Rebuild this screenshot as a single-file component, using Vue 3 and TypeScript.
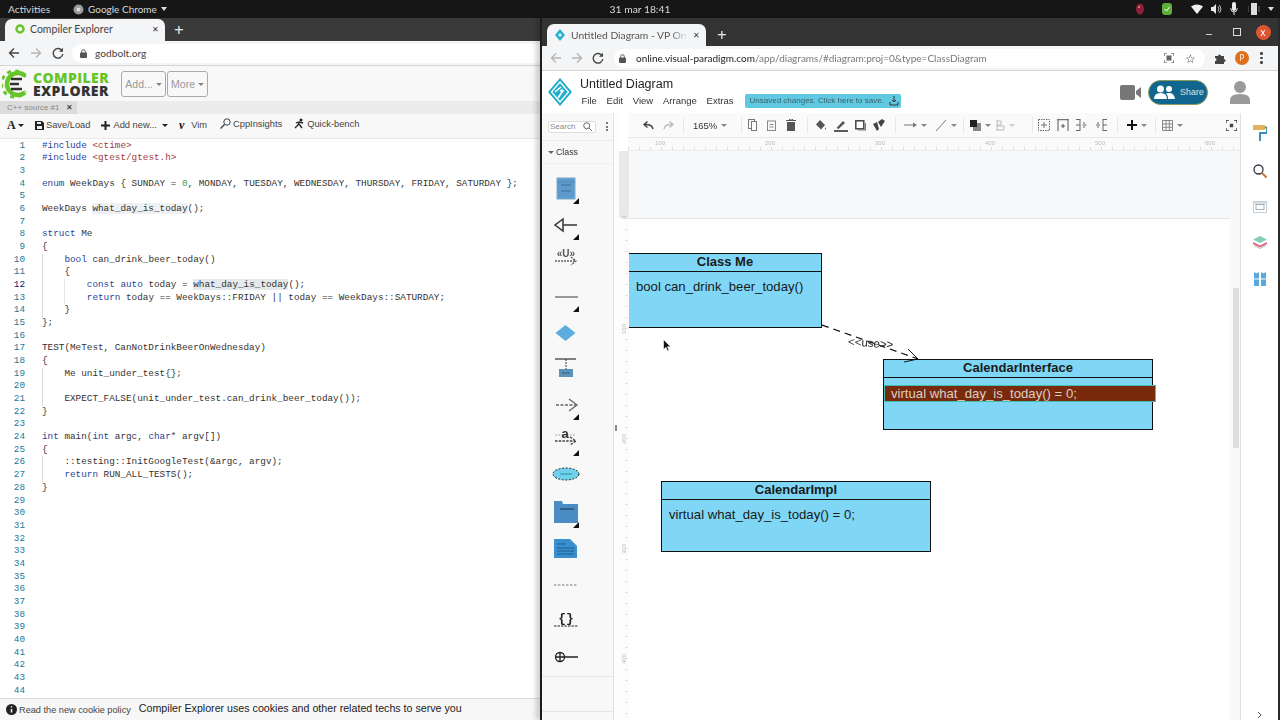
<script setup lang="ts">
const codeLines = [
  '#include <ctime>',
  '#include <gtest/gtest.h>',
  '',
  'enum WeekDays { SUNDAY = 0, MONDAY, TUESDAY, WEDNESDAY, THURSDAY, FRIDAY, SATURDAY };',
  '',
  'WeekDays what_day_is_today();',
  '',
  'struct Me',
  '{',
  '    bool can_drink_beer_today()',
  '    {',
  '        const auto today = what_day_is_today();',
  '        return today == WeekDays::FRIDAY || today == WeekDays::SATURDAY;',
  '    }',
  '};',
  '',
  'TEST(MeTest, CanNotDrinkBeerOnWednesday)',
  '{',
  '    Me unit_under_test{};',
  '',
  '    EXPECT_FALSE(unit_under_test.can_drink_beer_today());',
  '}',
  '',
  'int main(int argc, char* argv[])',
  '{',
  '    ::testing::InitGoogleTest(&argc, argv);',
  '    return RUN_ALL_TESTS();',
  '}'
]

const tokenRe = /(#include|<ctime>|<gtest\/gtest\.h>|\b(?:enum|struct|bool|const|auto|return|int|char)\b|\b0\b|what_day_is_today)/

function tokenClass(t: string) {
  if (t === 'what_day_is_today') return 'hl'
  if (t === '0') return 'num'
  if (t.startsWith('<')) return 'str'
  if (tokenRe.test(t)) return 'kw'
  return ''
}

const rows = Array.from({ length: 44 }, (_, i) => {
  const text = codeLines[i] ?? ''
  const lead = text.length - text.trimStart().length
  return {
    n: i + 1,
    depth: i === 19 ? 1 : Math.ceil(lead / 4),
    tokens: text.split(tokenRe).filter(Boolean).map(t => ({ t, c: tokenClass(t) }))
  }
})

const palette = [
  { id: 'class', more: true },
  { id: 'generalization', more: true },
  { id: 'use', more: false },
  { id: 'association', more: true },
  { id: 'diamond', more: false },
  { id: 'containment', more: false },
  { id: 'dependency', more: true },
  { id: 'anchor', more: true },
  { id: 'collab', more: false },
  { id: 'package', more: true },
  { id: 'note', more: false },
  { id: 'dashed', more: false },
  { id: 'constraint', more: false },
  { id: 'interface', more: false }
]

const topRuler = [100, 200, 300, 400, 500, 600]
const sideRuler = [0, 100, 200, 300, 400]
</script>

<template>
  <div class="screen">
    <header class="topbar">
      <span class="activities">Activities</span>
      <span class="app-name">
        <svg width="11" height="11" viewBox="0 0 12 12"><circle cx="6" cy="6" r="5.5" fill="#9a9a9a" /><circle cx="6" cy="6" r="2.2" fill="#dcdcdc" /></svg>
        Google Chrome
        <i class="caret-w"></i>
      </span>
      <span class="clock">31 mar 18:41</span>
      <div class="tray">
        <svg width="10" height="14" viewBox="0 0 10 14"><ellipse cx="5" cy="7" rx="4" ry="5.5" fill="#8e1f3a" /><circle cx="4" cy="5" r="1" fill="#d98" /></svg>
        <svg width="12" height="14" viewBox="0 0 12 14"><rect x="1" y="1" width="10" height="12" rx="3" fill="#5fae3a" /><path d="M3.5 7l2 2 3-4" stroke="#fff" fill="none" /></svg>
        <svg width="12" height="10" viewBox="0 0 12 10"><path d="M0 2.5Q6-1.500 12 2.500L6 10z" fill="#f0f0f0" /></svg>
        <svg width="11" height="10" viewBox="0 0 11 10"><path d="M0 3h2l3-3v10L2 7H0z" fill="#e8e8e8" /><path d="M7 2.500Q9 5 7 7.500M8.500 1Q11.500 5 8.500 9" stroke="#bbb" fill="none" /></svg>
        <svg width="8" height="14" viewBox="0 0 8 14"><rect x="2" y="0" width="4" height="9" rx="2" fill="#eee" /><path d="M.7 6q0 4 3.300 4t3.300-4M4 10v3" stroke="#ddd" fill="none" /></svg>
        <svg width="12" height="14" viewBox="0 0 12 14"><rect x="3" y="1" width="6" height="12" fill="#ddd" /><path d="M0 4v6M11 4v6" stroke="#666" /></svg>
        <i class="caret-w"></i>
      </div>
    </header>

    <div class="desktop">
      <!-- left chrome window -->
      <section class="win win-left">
        <div class="tabstrip">
          <div class="tab tab-ce">
            <svg width="10" height="10" viewBox="0 0 10 10"><circle cx="5" cy="5" r="3.500" fill="none" stroke="#67c52a" stroke-width="2.500" /></svg>
            <span class="tab-title">Compiler Explorer</span>
            <span class="tab-x">✕</span>
          </div>
          <span class="tab-plus">+</span>
        </div>
        <div class="omnibar">
          <svg class="nav" width="12" height="12" viewBox="0 0 12 12"><path d="M11 6H2M6 1.500L1.500 6 6 10.500" fill="none" stroke="#444" stroke-width="1.400" /></svg>
          <svg class="nav" width="12" height="12" viewBox="0 0 12 12"><path d="M1 6h9M6 1.500L10.500 6 6 10.500" fill="none" stroke="#b5b5b5" stroke-width="1.400" /></svg>
          <svg class="nav" width="12" height="12" viewBox="0 0 12 12"><path d="M10.300 4A4.800 4.800 0 1 0 10.800 7" fill="none" stroke="#444" stroke-width="1.400" /><path d="M11 .8v4H7z" fill="#444" /></svg>
          <div class="url url-ce">
            <svg width="7" height="9" viewBox="0 0 7 9"><rect y="3.500" width="7" height="5.500" rx="1" fill="#555" /><path d="M1.700 4V2.500a1.800 1.800 0 0 1 3.600 0V4" fill="none" stroke="#555" /></svg>
            <span>godbolt.org</span>
          </div>
        </div>

        <nav class="ce-nav">
          <div class="ce-logo">
            <svg width="29" height="30" viewBox="0 0 29 30">
              <path d="M23 6.500A11 11 0 1 0 23 23.500" fill="none" stroke="#67c52a" stroke-width="4.500" />
              <path d="M24 8A13 13 0 1 0 24 22" fill="none" stroke="#67c52a" stroke-width="3" stroke-dasharray="4 4.200" transform="translate(-.5 0)" />
              <path d="M9 10h11M8 15h9M9 20h11" stroke="#333" stroke-width="2.400" />
            </svg>
            <div class="ce-words"><b class="g">COMPILER</b><b>EXPLORER</b></div>
          </div>
          <button class="ce-btn add">Add... <i class="caret"></i></button>
          <button class="ce-btn more">More <i class="caret"></i></button>
        </nav>

        <div class="gl-tabs">
          <span class="gl-tab">C++ source #1 <em>✕</em></span>
        </div>
        <div class="editor-tools">
          <span class="font-a"><b>A</b><i class="caret dark"></i></span>
          <span class="tool save">
            <svg width="9" height="9" viewBox="0 0 9 9"><path d="M0 0h7l2 2v7H0z" fill="#222" /><rect x="2" y="5" width="5" height="3" fill="#eee" /><rect x="2" y="1" width="4" height="2" fill="#eee" /></svg>
            Save/Load
          </span>
          <span class="tool addnew">
            <svg width="9" height="9" viewBox="0 0 9 9"><path d="M4.500 0v9M0 4.500h9" stroke="#222" stroke-width="2" /></svg>
            Add new...<i class="caret dark"></i>
          </span>
          <span class="tool vim"><b>v</b> Vim</span>
          <span class="tool raised insights">
            <svg width="11" height="11" viewBox="0 0 11 11"><circle cx="7" cy="4" r="3.200" fill="none" stroke="#345" /><path d="M4.500 6.500L.5 10.500" stroke="#345" stroke-width="1.300" /></svg>
            CppInsights
          </span>
          <span class="tool raised bench">
            <svg width="11" height="11" viewBox="0 0 11 11"><circle cx="7" cy="2" r="1.500" fill="#222" /><path d="M1 10l3-3 1-3 4 1M5 6l3 4M4 4l-2 1" stroke="#222" stroke-width="1.300" fill="none" /></svg>
            Quick-bench
          </span>
        </div>

        <div class="editor">
          <div v-for="r in rows" :key="r.n" class="row">
            <span class="ln" :class="{ cur: r.n === 12 }">{{ r.n }}</span>
            <span class="code" :class="'lv' + r.depth"><span v-for="(tok, i) in r.tokens" :key="i" :class="[tok.c, { strong: r.n === 12 && tok.c === 'hl' }]">{{ tok.t }}</span></span>
          </div>
        </div>

        <footer class="cookie">
          <svg width="11" height="11" viewBox="0 0 11 11"><circle cx="5.500" cy="5.500" r="5.500" fill="#222" /><path d="M5.500 2.200v1.300M5.500 5v3.500" stroke="#fff" stroke-width="1.500" /></svg>
          <span class="policy">Read the new cookie policy</span>
          <span class="cookie-msg">Compiler Explorer uses cookies and other related techs to serve you</span>
        </footer>
      </section>

      <!-- right chrome window -->
      <section class="win win-right">
        <div class="tabstrip tabstrip-r">
          <div class="tab tab-vp">
            <svg width="10" height="12" viewBox="0 0 10 12"><path d="M5 0l5 6-5 6-5-6z" fill="#28b3d0" /><circle cx="5" cy="6" r="1.500" fill="#fff" /></svg>
            <span class="tab-title fade">Untitled Diagram - VP On</span>
            <span class="tab-x">✕</span>
          </div>
          <span class="tab-plus">+</span>
          <div class="wm">
            <span class="wm-min"></span>
            <span class="wm-max"></span>
            <span class="wm-close">x</span>
          </div>
        </div>
        <div class="omnibar omnibar-r">
          <svg class="nav" width="12" height="12" viewBox="0 0 12 12"><path d="M11 6H2M6 1.500L1.500 6 6 10.500" fill="none" stroke="#b5b5b5" stroke-width="1.400" /></svg>
          <svg class="nav" width="12" height="12" viewBox="0 0 12 12"><path d="M1 6h9M6 1.500L10.500 6 6 10.500" fill="none" stroke="#b5b5b5" stroke-width="1.400" /></svg>
          <svg class="nav" width="12" height="12" viewBox="0 0 12 12"><path d="M10.300 4A4.800 4.800 0 1 0 10.800 7" fill="none" stroke="#444" stroke-width="1.400" /><path d="M11 .8v4H7z" fill="#444" /></svg>
          <div class="url url-vp">
            <svg width="7" height="9" viewBox="0 0 7 9"><rect y="3.500" width="7" height="5.500" rx="1" fill="#555" /><path d="M1.700 4V2.500a1.800 1.800 0 0 1 3.600 0V4" fill="none" stroke="#555" /></svg>
            <span class="url-text"><span class="host">online.visual-paradigm.com</span>/app/diagrams/#diagram:proj=0&amp;type=ClassDiagram</span>
            <svg class="qr" width="10" height="10" viewBox="0 0 10 10"><path d="M0 3V0h3M7 0h3v3M10 7v3H7M3 10H0V7" fill="none" stroke="#555" stroke-width="1.200" /><rect x="2.500" y="2.500" width="5" height="5" fill="#666" /></svg>
            <span class="star">☆</span>
          </div>
          <svg class="puzzle" width="11" height="11" viewBox="0 0 11 11"><path d="M0 3h3a1.500 1.500 0 0 1 3 0h3v3a1.500 1.500 0 0 1 0 3v2H0V8a1.500 1.500 0 0 0 0-3z" fill="#444" /></svg>
          <span class="avatar">P</span>
          <span class="dots"><i></i><i></i><i></i></span>
        </div>

        <div class="vp-header">
          <svg class="vp-logo" width="26" height="30" viewBox="0 0 26 30">
            <path d="M13 1l12 14-12 14L1 15z" fill="#22aecb" />
            <path d="M13 5l8.500 10L13 25 4.500 15z" fill="none" stroke="#fff" stroke-width="1.300" />
            <path d="M8 15l6-5M11 21l4-6" stroke="#fff" stroke-width="1.600" />
            <circle cx="15" cy="14" r="1.800" fill="#fff" />
          </svg>
          <div class="vp-titles">
            <div class="vp-title">Untitled Diagram</div>
            <div class="vp-menu">
              <span>File</span><span>Edit</span><span>View</span><span>Arrange</span><span>Extras</span>
              <span class="unsaved">Unsaved changes. Click here to save.
                <svg width="10" height="10" viewBox="0 0 10 10"><path d="M5 0v6M3 4l2 2 2-2M1 6v3h8V6" fill="none" stroke="#333" /></svg>
              </span>
            </div>
          </div>
          <div class="vp-actions">
            <svg width="21" height="15" viewBox="0 0 21 15"><rect width="15" height="15" rx="2" fill="#777" /><path d="M16 6l5-4v11l-5-4z" fill="#777" /></svg>
            <div class="share">
              <svg width="21" height="14" viewBox="0 0 21 14"><circle cx="6.500" cy="4" r="3.500" fill="#fff" /><circle cx="15" cy="4" r="3" fill="#fff" /><path d="M0 14q0-6 6.500-6t6.500 6zM14 14q0-4-2-5.500 8-2 9 5.500z" fill="#fff" /></svg>
              <span>Share</span>
            </div>
            <svg class="person" width="20" height="24" viewBox="0 0 20 24"><circle cx="10" cy="7" r="6" fill="#9a9a9a" /><path d="M0 24v-4q0-6 10-6t10 6v4z" fill="#9a9a9a" /></svg>
          </div>
        </div>

        <div class="vp-body">
          <aside class="palette-col">
            <div class="pal-search">
              <span class="search-box">Search
                <svg width="9" height="9" viewBox="0 0 9 9"><circle cx="3.700" cy="3.700" r="3" fill="none" stroke="#666" /><path d="M6 6l3 3" stroke="#666" /></svg>
              </span>
              <span class="vdots"><i></i><i></i><i></i></span>
            </div>
            <div class="pal-head"><i class="caret dark-g"></i> Class</div>
            <div class="pal-list">
              <div v-for="p in palette" :key="p.id" class="pal-item">
                <svg width="30" height="30" viewBox="0 0 30 30">
                  <g v-if="p.id === 'class'"><rect x="6" y="4" width="18" height="21" fill="#5d9bcc" stroke="#7fa9c9" /><path d="M10 11h10M10 17h10" stroke="#3a6f9c" /><path d="M6 8h18" stroke="#3a6f9c" opacity=".4" /></g>
                  <g v-else-if="p.id === 'generalization'"><path d="M12 9L4 15l8 6zM12 15h14" fill="none" stroke="#333" stroke-width="1.500" /></g>
                  <g v-else-if="p.id === 'use'"><text x="15" y="11" class="pal-t">«U»</text><path d="M4 15h20M20 11l5 4-5 4" fill="none" stroke="#666" stroke-dasharray="2 1" stroke-width="1.300" /></g>
                  <g v-else-if="p.id === 'association'"><path d="M4 15h23" stroke="#999" stroke-width="2" /></g>
                  <g v-else-if="p.id === 'diamond'"><path d="M14.500 7l10 8-10 8-10-8z" fill="#5dace0" /></g>
                  <g v-else-if="p.id === 'containment'"><path d="M4 5h21" stroke="#333" stroke-width="1.200" /><path d="M15 5v11" stroke="#333" stroke-dasharray="2 1" /><rect x="8" y="15" width="14" height="8" fill="#5d93bb" /><path d="M11 19h8" stroke="#35607f" /></g>
                  <g v-else-if="p.id === 'dependency'"><path d="M5 15h20" stroke="#666" stroke-dasharray="3 1.500" stroke-width="1.300" /><path d="M18 9l8 6-8 6" fill="none" stroke="#666" stroke-width="1.300" /></g>
                  <g v-else-if="p.id === 'anchor'"><path d="M4 9h20" stroke="#aaa" stroke-dasharray="2 1" /><text x="14" y="12" class="pal-a">a</text><path d="M4 15h20M19 11l6 4-6 4" fill="none" stroke="#444" stroke-dasharray="2.500 1.200" stroke-width="1.300" /></g>
                  <g v-else-if="p.id === 'collab'"><ellipse cx="15" cy="12" rx="13" ry="6" fill="#6fd2ea" stroke="#123" stroke-dasharray="2 1.500" /><path d="M9 12h12" stroke="#2a90ad" /></g>
                  <g v-else-if="p.id === 'package'"><path d="M3 3h8l1 3h15v19H3z" fill="#4a8cc4" /><path d="M9 11h14" stroke="#234f75" stroke-width="1.500" /></g>
                  <g v-else-if="p.id === 'note'"><path d="M3 5h16l7 7v12H3z" fill="#3a8fd0" /><path d="M6 10h9M6 14h17M6 17h17M6 20h17" stroke="#1d5c8f" /></g>
                  <g v-else-if="p.id === 'dashed'"><path d="M3 15h24" stroke="#777" stroke-dasharray="2.500 1.500" /></g>
                  <g v-else-if="p.id === 'constraint'"><text x="15" y="16" class="pal-b">{}</text><path d="M3 20h24" stroke="#222" stroke-dasharray="2.500 1" stroke-width="1.200" /></g>
                  <g v-else><circle cx="9" cy="15" r="4.500" fill="none" stroke="#222" stroke-width="1.300" /><path d="M4.500 15H27M9 10.500v9" stroke="#222" stroke-width="1.300" /></g>
                </svg>
                <i v-if="p.more" class="corner"></i>
              </div>
            </div>
            <div class="pal-foot"></div>
          </aside>

          <div class="splitter"><span></span></div>

          <div class="workspace">
            <div class="toolbar">
              <div class="tb tb-hist">
                <svg width="12" height="9" viewBox="0 0 12 9"><path d="M11 8Q10 3 3 3.500M5.500.5L2 3.500l3.500 3" fill="none" stroke="#444" stroke-width="1.400" /></svg>
                <svg width="12" height="9" viewBox="0 0 12 9"><path d="M1 8Q2 3 9 3.500M6.500.5L10 3.500l-3.500 3" fill="none" stroke="#bbb" stroke-width="1.400" /></svg>
              </div>
              <div class="tb tb-zoom">165% <i class="caret grey"></i></div>
              <div class="tb tb-edit">
                <svg width="9" height="12" viewBox="0 0 9 12"><rect x=".5" y=".5" width="6" height="9" fill="none" stroke="#777" /><rect x="3.500" y="2.500" width="5" height="9" fill="#fff" stroke="#777" /></svg>
                <svg width="9" height="11" viewBox="0 0 9 11"><rect x=".5" y="1" width="8" height="9.500" fill="none" stroke="#888" /><path d="M2.500 4.500h4M2.500 7h4" stroke="#888" /></svg>
                <svg width="10" height="12" viewBox="0 0 10 12"><path d="M0 1.500h10M3.500 1.500V0h3v1.500" stroke="#555" fill="none" /><path d="M1 3h8v9H1z" fill="#555" /></svg>
              </div>
              <div class="tb tb-style">
                <svg width="12" height="12" viewBox="0 0 12 12"><path d="M5 1l5 5-4 4.500-5-5z" fill="#555" /><path d="M10.500 8q1 2 0 3-1-1 0-3z" fill="#555" /></svg>
                <svg width="14" height="13" viewBox="0 0 14 13"><path d="M2.500 9L9 2l2 2-6.500 6z" fill="#555" /><path d="M0 12h14" stroke="#333" stroke-width="1.600" /></svg>
                <svg width="11" height="11" viewBox="0 0 11 11"><rect x=".8" y=".8" width="8" height="8" fill="#fff" stroke="#444" stroke-width="1.500" /><path d="M3 10h7.500V3" fill="none" stroke="#777" stroke-width="1.200" /></svg>
                <svg width="12" height="12" viewBox="0 0 12 12"><path d="M0 5l4-2 2 7-2 2zM5 3l4-3 3 2-4 6z" fill="#444" /></svg>
              </div>
              <div class="tb tb-conn">
                <span class="combo"><svg width="13" height="8" viewBox="0 0 13 8"><path d="M0 4h9" stroke="#777" /><path d="M9 1.500L13 4 9 6.500z" fill="#777" /></svg><i class="caret grey"></i></span>
                <span class="combo"><svg width="12" height="11" viewBox="0 0 12 11"><path d="M1 11L11 0" stroke="#777" /></svg><i class="caret grey"></i></span>
              </div>
              <div class="tb tb-order">
                <span class="combo"><svg width="11" height="11" viewBox="0 0 11 11"><rect x="3" y="3" width="8" height="8" fill="#888" /><rect width="7" height="7" fill="#222" /></svg><i class="caret grey"></i></span>
                <span class="combo"><svg width="9" height="11" viewBox="0 0 9 11"><path d="M1 0v11M1 1h4v4H1M1 6h7v4H1" fill="none" stroke="#bbb" /></svg><i class="caret grey light"></i></span>
              </div>
              <div class="tb tb-layout">
                <svg width="12" height="12" viewBox="0 0 12 12"><rect x=".5" y=".5" width="11" height="11" fill="none" stroke="#666" stroke-dasharray="1.500 1" /><path d="M6 3v6M3 6h6" stroke="#777" /></svg>
                <svg width="12" height="12" viewBox="0 0 12 12"><path d="M0 .7h12M1 1v11M11 1v11" stroke="#555" /><path d="M4 7h4M6 5v4" stroke="#555" /></svg>
                <svg width="12" height="12" viewBox="0 0 12 12"><path d="M4 0v12M0 .5h4M0 11.500h4M0 6h4M8 3v2M8 7v2M6.500 6h4" stroke="#666" /></svg>
                <svg width="12" height="12" viewBox="0 0 12 12"><path d="M8 0v12M12 .5H8M12 11.500H8M12 6H8M3 3v2M3 7v2M1 6h4" stroke="#666" /></svg>
              </div>
              <div class="tb tb-insert">
                <svg width="10" height="10" viewBox="0 0 10 10"><path d="M5 0v10M0 5h10" stroke="#111" stroke-width="2" /></svg><i class="caret grey"></i>
              </div>
              <div class="tb tb-grid">
                <svg width="11" height="11" viewBox="0 0 11 11"><path d="M.5.5h10v10H.5zM4 .5v10M7.300.5v10M.5 4h10M.5 7.300h10" fill="none" stroke="#888" /></svg><i class="caret grey"></i>
              </div>
              <svg class="fit" width="11" height="11" viewBox="0 0 11 11"><path d="M0 3V0h3M8 0h3v3M11 8v3H8M3 11H0V8" fill="none" stroke="#333" stroke-width="1.300" /><rect x="3.800" y="3.800" width="3.400" height="3.400" fill="#444" /></svg>
            </div>

            <div class="ruler-top">
              <span v-for="t in topRuler" :key="t">{{ t }}</span>
            </div>

            <div class="stage">
              <div class="ruler-side">
                <span v-for="t in sideRuler" :key="t">{{ t }}</span>
              </div>
              <div class="page"></div>
              <div class="scrollbar"></div>

              <!-- diagram: shapes are placed on a free canvas -->
              <div class="uml uml-me">
                <div class="uml-name">Class Me</div>
                <div class="uml-body">bool can_drink_beer_today()</div>
              </div>
              <div class="uml uml-iface">
                <div class="uml-name">CalendarInterface</div>
                <div class="uml-body"><div class="op-selected">virtual what_day_is_today() = 0;</div></div>
              </div>
              <div class="uml uml-impl">
                <div class="uml-name">CalendarImpl</div>
                <div class="uml-body">virtual what_day_is_today() = 0;</div>
              </div>
              <svg class="connector" width="110" height="50" viewBox="0 0 110 50">
                <path d="M0 2L96 36" stroke="#111" stroke-width="1.200" stroke-dasharray="7 5" fill="none" />
                <path d="M86 26L96 36L82 39" stroke="#111" stroke-width="1" fill="none" />
              </svg>
              <span class="stereo">&lt;&lt;use&gt;&gt;</span>
              <svg class="cursor" width="8" height="13" viewBox="0 0 8 13"><path d="M.5.5v10l2.500-2.300 1.500 3.800 1.500-.6-1.500-3.700h3z" fill="#111" stroke="#fff" stroke-width=".6" /></svg>
            </div>
          </div>

          <aside class="side-tools">
            <svg width="14" height="16" viewBox="0 0 14 16"><rect y="0" width="12" height="5" fill="#e2b35c" /><path d="M12 2.500h2V8H7v8" fill="none" stroke="#3c8fb5" stroke-width="2" /></svg>
            <svg width="14" height="14" viewBox="0 0 14 14"><circle cx="5.500" cy="5.500" r="4.500" fill="none" stroke="#334" stroke-width="1.300" /><path d="M9 9l4.500 4.500" stroke="#c8743c" stroke-width="2" /></svg>
            <svg width="14" height="12" viewBox="0 0 14 12"><rect x=".5" y=".5" width="13" height="11" fill="none" stroke="#c5ced4" /><rect x="3" y="3.500" width="8" height="5" fill="none" stroke="#9fb0ba" /><path d="M1 1h12v2H1z" fill="#d9e0e4" /></svg>
            <svg width="14" height="13" viewBox="0 0 14 13"><path d="M7 0l7 3.500L7 7 0 3.500z" fill="#84cdb8" /><path d="M0 6l7 3.500L14 6v2l-7 3.500L0 8z" fill="#d9607a" /><path d="M1 9.500l6 3 6-3" fill="none" stroke="#bbb" /></svg>
            <svg width="12" height="14" viewBox="0 0 12 14"><path d="M0 0l2.500 1.500L5 0v6.500H0zM7 0l2.500 1.500L12 0v6.500H7zM0 7.500h5V14H0zM7 7.500h5V14H7z" fill="#56a9dc" /></svg>
            <svg class="chev" width="5" height="8" viewBox="0 0 5 8"><path d="M1 1l3 3-3 3" fill="none" stroke="#555" /></svg>
          </aside>
        </div>
      </section>
    </div>
  </div>
</template>

<style>
html, body { margin: 0; background: #000; overflow: hidden; }
</style>

<style scoped>
.screen {
  width: 1280px;
  height: 720px;
  display: flex;
  flex-direction: column;
  overflow: hidden;
  font-family: "Liberation Sans", Arial, sans-serif;
  color: #333;
  filter: blur(0.3px);
}
i { display: inline-block; font-style: normal; }

.topbar {
  height: 18px;
  flex: none;
  background: #161616;
  color: #d8d8d8;
  display: flex;
  align-items: center;
  position: relative;
  font: 10.300px Lato, sans-serif;
}
.activities { margin-left: 8px; }
.app-name { position: absolute; left: 73px; display: flex; align-items: center; gap: 4px; font-size: 10px; }
.clock { position: absolute; left: 592px; width: 96px; text-align: center; }
.tray { margin-left: auto; padding-right: 6.500px; display: flex; align-items: center; gap: 8px; }
.tray svg:nth-child(2) { margin-left: 8px; }
.tray svg:nth-child(3) { margin-left: 10px; }
.tray svg:nth-child(6) { margin-left: 2px; }
.caret-w { border: 3.5px solid transparent; border-top: 4px solid #ddd; border-bottom: 0; }

.caret { border: 3px solid transparent; border-top: 3.5px solid #888; border-bottom: 0; vertical-align: middle; }
.caret.dark { border-top-color: #222; margin-left: 4px; }
.caret.dark-g { border-top-color: #666; }
.caret.grey { border-top-color: #888; margin-left: 4px; }
.caret.grey.light { border-top-color: #ccc; }

.desktop { flex: 1; display: flex; min-height: 0; }
.win { display: flex; flex-direction: column; min-width: 0; }
.win-left { width: 540px; flex: none; background: #fff; }
.win-right {
  width: 740px;
  flex: none;
  background: #fff;
  border-left: 2px solid #1c1c1c;
  border-right: 2px solid #2a2a2a;
  box-sizing: border-box;
  box-shadow: -4px 0 5px rgba(0, 0, 0, .18);
  z-index: 1;
}

.tabstrip {
  height: 23px;
  flex: none;
  background: #3a3a3a;
  display: flex;
  align-items: flex-end;
  padding-left: 5px;
}
.tab {
  height: 22px;
  background: #f4f5f6;
  border-radius: 7px 7px 0 0;
  box-sizing: border-box;
  display: flex;
  align-items: center;
  color: #444;
  font: 10.500px Lato, sans-serif;
}
.tab-ce { width: 160px; padding: 0 6px 2px 10px; }
.tab-title { margin-left: 5px; flex: 1; white-space: nowrap; overflow: hidden; }
.tab-x { font-size: 8px; color: #333; }
.tab-plus { color: #e8e8e8; font: 17px "Noto Sans", sans-serif; margin: 0 0 1px 9px; line-height: 20px; }

.tabstrip-r { height: 28px; padding-left: 5px; background: #333; }
.tab-vp { width: 159px; padding: 0 6px 0 8px; font-size: 10.300px; }
.fade {
  margin-left: 6px;
  margin-right: 5px;
  color: #555;
  -webkit-mask-image: linear-gradient(90deg, #000 85%, transparent);
  mask-image: linear-gradient(90deg, #000 85%, transparent);
}
.tabstrip-r .tab-plus { margin-left: 11px; }
.wm { margin-left: auto; align-self: center; display: flex; align-items: center; padding-right: 7.500px; }
.wm-min { width: 6px; height: 1.500px; background: #ccc; margin: 5px 0 0; }
.wm-max { width: 6px; height: 6px; border: 1px solid #ddd; margin-left: 21px; }
.wm-close {
  width: 15px;
  height: 15px;
  border-radius: 50%;
  background: #dd5533;
  color: #fff;
  font: 10px/14px "Noto Sans", sans-serif;
  text-align: center;
  margin-left: 15px;
}

.omnibar {
  height: 24px;
  flex: none;
  background: #f4f5f6;
  display: flex;
  align-items: center;
  border-bottom: 1px solid #d4d4d4;
}
.nav { margin-left: 8px; flex: none; }
.omnibar .nav + .nav { margin-left: 10px; }
.omnibar-r .nav + .nav { margin-left: 9px; }
.url {
  height: 19px;
  background: #fff;
  border-radius: 10px;
  display: flex;
  align-items: center;
  font: 10.200px Lato, sans-serif;
  color: #444;
}
.url-ce { flex: 1; border-radius: 10px 0 0 10px; padding-left: 8px; gap: 8px; margin-left: 8px; }
.url-vp { width: 591px; padding: 0 9px 0 5px; margin-left: 10px; gap: 10px; box-sizing: border-box; }
.url-text { color: #777; font-size: 10px; }
.host { color: #222; }
.qr { margin-left: auto; }
.star { font-size: 12px; color: #333; margin-left: 1px; }
.puzzle { margin-left: 10px; }
.avatar {
  width: 14px;
  height: 14px;
  border-radius: 50%;
  background: #e0701c;
  color: #fff;
  font: 8px/14px "Noto Sans", sans-serif;
  text-align: center;
  margin-left: 9px;
}
.dots { display: flex; flex-direction: column; gap: 2px; margin-left: 11px; }
.dots i { width: 2.500px; height: 2.500px; background: #444; border-radius: 50%; }

/* compiler explorer */
.ce-nav {
  height: 35px;
  flex: none;
  background: #f8f8f8;
  display: flex;
  align-items: center;
  padding-left: 2px;
}
.ce-logo { display: flex; align-items: center; width: 119px; }
.ce-words { display: flex; flex-direction: column; font: 700 14px/13px "Open Sans", sans-serif; color: #333; letter-spacing: .4px; margin-left: 2px; }
.ce-words .g { color: #67c52a; }
.ce-btn {
  height: 26px;
  background: #f8f8f8;
  border: 1px solid #aaa;
  border-radius: 3px;
  color: #999;
  font: 10.500px "Liberation Sans", sans-serif;
  padding: 0;
}
.add { width: 45px; }
.more { width: 41px; margin-left: 1px; }

.gl-tabs { height: 13px; flex: none; display: flex; background: #ececec; }
.gl-tab {
  height: 13px;
  width: 77px;
  box-sizing: border-box;
  background: #dcdcdc;
  color: #888;
  font-size: 8px;
  line-height: 13px;
  padding-left: 7px;
  white-space: nowrap;
}
.gl-tab em { font-style: normal; color: #222; margin-left: 4px; }

.editor-tools {
  height: 22px;
  padding-bottom: 2px;
  flex: none;
  background: #f8f8f8;
  border-bottom: 1px solid #e8e8e8;
  display: flex;
  align-items: center;
  font-size: 9.300px;
  color: #444;
  padding-left: 7px;
}
.font-a { width: 28px; font: 700 12px "Liberation Serif", serif; color: #222; }
.font-a .caret { margin-left: 2px; }
.tool { display: flex; align-items: center; gap: 2px; white-space: nowrap; }
.addnew { margin-left: 11px; gap: 3px; }
.addnew .caret { margin-left: 2px; }
.vim { margin-left: 11px; gap: 7px; }
.vim b { font: italic 700 12px "Liberation Serif", serif; color: #111; }
.raised { margin-top: -3px; }
.insights { margin-left: 13px; }
.bench { margin-left: 12px; }

.editor {
  flex: 1;
  min-height: 0;
  overflow: hidden;
  padding-top: 0.700px;
  background: #fff;
  font: 9.335px/12.680px "Liberation Mono", monospace;
}
.row { display: flex; height: 12.680px; }
.ln { width: 25px; flex: none; text-align: right; color: #237893; }
.ln.cur { color: #0b216f; }
.code { margin-left: 17px; white-space: pre; flex: 1; }
.lv1 { background: linear-gradient(#d8d8d8, #d8d8d8) 0 0 / 1px 100% no-repeat; }
.lv2 {
  background:
    linear-gradient(#d8d8d8, #d8d8d8) 0 0 / 1px 100% no-repeat,
    linear-gradient(#e4e4e4, #e4e4e4) 22.400px 0 / 1px 100% no-repeat;
}
.kw { color: #2a3f9e; }
.str { color: #a33a3a; }
.num { color: #2f9b78; }
.hl { background: #eef1f3; }
.hl.strong { background: #e4e9ec; }

.cookie {
  height: 22px;
  flex: none;
  background: #f7f7f7;
  border-top: 1px solid #ddd;
  box-sizing: border-box;
  display: flex;
  align-items: center;
  padding-left: 6px;
  font-size: 9.200px;
  color: #444;
}
.policy { margin-left: 2px; }
.cookie-msg { margin-left: 8px; font-size: 10.670px; color: #222; margin-top: -4px; }

/* visual paradigm */
.vp-header {
  height: 42px;
  flex: none;
  display: flex;
  align-items: center;
  padding-left: 5px;
  background: #fff;
}
.vp-titles { margin-left: 7px; }
.vp-title { font-size: 12.500px; color: #222; line-height: 15px; }
.vp-menu { display: flex; align-items: center; font-size: 9.500px; color: #333; margin-top: 2px; padding-left: 1.500px; }
.vp-menu span + span { margin-left: 9.800px; }
.vp-menu .unsaved {
  margin-left: 11px;
  height: 14px;
  width: 156px;
  background: #5fc9e2;
  border-radius: 2px;
  font-size: 8px;
  line-height: 14px;
  color: #3d5f68;
  padding-left: 5px;
  box-sizing: border-box;
  display: flex;
  align-items: center;
  gap: 5px;
  white-space: nowrap;
}
.unsaved svg { flex: none; }
.vp-actions { margin-left: auto; display: flex; align-items: center; padding-right: 28px; }
.share {
  width: 60px;
  height: 25px;
  margin-left: 7px;
  border-radius: 13px;
  background: #11668f;
  border: 1px solid #8d9a5d;
  box-sizing: border-box;
  display: flex;
  align-items: center;
  padding-left: 5px;
  gap: 5px;
  color: #d8e8f0;
  font-size: 9px;
}
.person { margin-left: 22px; }

.vp-body { flex: 1; min-height: 0; display: flex; }
.palette-col {
  width: 72px;
  flex: none;
  background: #f8f8f8;
  border-right: 1px solid #e2e2e2;
  display: flex;
  flex-direction: column;
  box-sizing: border-box;
  overflow: hidden;
}
.pal-search {
  height: 28px;
  flex: none;
  display: flex;
  align-items: center;
  padding-left: 6px;
  border-bottom: 1px solid #ececec;
  box-sizing: border-box;
}
.search-box {
  width: 48px;
  height: 12px;
  border: 1px solid #ddd;
  border-radius: 2px;
  background: #fff;
  box-sizing: border-box;
  color: #888;
  font-size: 8px;
  line-height: 11px;
  display: flex;
  align-items: center;
  justify-content: space-between;
  padding: 0 3px 0 1px;
}
.vdots { display: flex; flex-direction: column; gap: 1.500px; margin-left: 10px; }
.vdots i { width: 2px; height: 2px; background: #555; border-radius: 50%; }
.pal-head {
  height: 23px;
  flex: none;
  display: flex;
  align-items: center;
  gap: 2px;
  padding-left: 6px;
  font-size: 8.800px;
  color: #333;
  border-bottom: 1px solid #f0f0f0;
  box-sizing: border-box;
}
.pal-list { margin-top: 7px; flex: none; }
.pal-item {
  height: 36px;
  display: flex;
  align-items: center;
  position: relative;
  padding-left: 9px;
}
.corner {
  position: absolute;
  left: 31px;
  top: 27px;
  border: 3.500px solid transparent;
  border-right-color: #111;
  border-bottom-color: #111;
}
.pal-t { font: 700 10px "Liberation Sans", sans-serif; fill: #555; text-anchor: middle; }
.pal-a { font: 700 13px "Liberation Sans", sans-serif; fill: #333; text-anchor: middle; }
.pal-b { font: 700 13px "Liberation Mono", monospace; fill: #222; text-anchor: middle; }
.pal-foot { height: 34px; margin-top: 1px; flex: none; border-top: 1px solid #e6e6e6; border-bottom: 1px solid #e6e6e6; }

.splitter { width: 5px; flex: none; background: #fdfdfd; position: relative; }
.splitter span { position: absolute; left: 1px; top: 312px; width: 2px; height: 6px; background: #888; }

.workspace { flex: 1; min-width: 0; display: flex; flex-direction: column; }
.toolbar {
  height: 25px;
  flex: none;
  background: #fafafa;
  border-bottom: 1px solid #e6e6e6;
  display: flex;
  align-items: center;
  padding-left: 14px;
  margin-left: 9px;
  box-sizing: border-box;
  font-size: 9.500px;
  color: #333;
}
.tb { display: flex; align-items: center; height: 16px; border-right: 1px solid #e8e8e8; box-sizing: border-box; }
.tb-hist { width: 42px; gap: 9px; }
.tb-zoom { width: 58px; padding-left: 9px; }
.tb-edit { width: 66px; gap: 11px; padding-left: 6px; }
.tb-edit svg + svg { margin-left: -1px; }
.tb-style { width: 88px; gap: 7px; padding-left: 7px; }
.tb-conn { width: 68px; padding-left: 8px; gap: 8px; }
.combo { display: flex; align-items: center; }
.tb-order { width: 69px; padding-left: 6px; gap: 5px; }
.tb-layout { width: 85px; padding-left: 5px; gap: 7px; }
.tb-insert { width: 38px; padding-left: 9px; }
.tb-grid { border-right: 0; padding-left: 6px; }
.fit { margin-left: auto; margin-right: 3px; }

.ruler-top {
  height: 13px;
  flex: none;
  margin-left: 9px;
  display: flex;
  padding-left: 27px;
  overflow: hidden;
  background:
    repeating-linear-gradient(90deg, #dcdcdc 0 1px, transparent 1px 11px) 0 100% / 100% 3px no-repeat,
    #fafafa;
  border-bottom: 1px solid #ececec;
  box-sizing: border-box;
  font-size: 6px;
  color: #bbb;
  line-height: 11px;
}
.ruler-top span { width: 110px; flex: none; }

.stage { flex: 1; min-height: 0; position: relative; background: #f8f9fa; overflow: hidden; }
.ruler-side {
  position: absolute;
  left: 0;
  top: 0;
  bottom: 0;
  width: 10px;
  background:
    linear-gradient(#e9e9e9, #e9e9e9) 0 0 / 100% 67px no-repeat,
    repeating-linear-gradient(#e2e2e2 0 1px, transparent 1px 11px) 6px 67px / 3px 100% no-repeat,
    #fcfcfc;
}
.ruler-side span {
  position: absolute;
  left: -5px;
  width: 20px;
  text-align: center;
  font-size: 6px;
  color: #bbb;
  transform: rotate(-90deg);
}
.ruler-side span:nth-child(1) { top: 63px; }
.ruler-side span:nth-child(2) { top: 175px; }
.ruler-side span:nth-child(3) { top: 285px; }
.ruler-side span:nth-child(4) { top: 395px; }
.ruler-side span:nth-child(5) { top: 505px; }

.page {
  position: absolute;
  left: 10px;
  top: 67px;
  right: 10px;
  bottom: 0;
  background: #fff;
  border-top: 1px solid #e4e4e4;
}
.scrollbar { position: absolute; right: 1px; top: 137px; width: 6px; height: 160px; background: #dedede; }

.uml {
  position: absolute;
  box-sizing: border-box;
  background: #7fd7f5;
  border: 1px solid #111;
  color: #1a1a1a;
}
.uml-name {
  height: 18px;
  box-sizing: border-box;
  border-bottom: 1px solid #111;
  text-align: center;
  font-size: 13px;
  font-weight: 700;
  line-height: 16px;
}
.uml-body { font-size: 13.150px; padding: 7px 7px 0; line-height: 16px; }
.uml-me { left: 10px; top: 102px; width: 193px; height: 75px; border-left: 0; }
.uml-iface { left: 264px; top: 208px; width: 270px; height: 71px; }
.uml-impl { left: 42px; top: 330px; width: 270px; height: 71px; }
.uml-iface .uml-body { padding: 7px 0 0; }
.op-selected {
  width: 272px;
  height: 17px;
  box-sizing: border-box;
  background: #7a2a0c;
  border: 1px solid #3fc0b0;
  color: #d8d0c8;
  padding-left: 6px;
  line-height: 15px;
  position: relative;
}
.connector { position: absolute; left: 203px; top: 172px; }
.stereo {
  position: absolute;
  left: 229px;
  top: 186px;
  font-size: 11.500px;
  color: #222;
  transform: rotate(4deg);
}
.cursor { position: absolute; left: 44px; top: 188px; }

.side-tools {
  width: 38px;
  flex: none;
  background: #fff;
  border-left: 1px solid #e0e0e0;
  box-sizing: border-box;
  display: flex;
  flex-direction: column;
  align-items: center;
  padding-top: 12px;
  gap: 23px;
  position: relative;
}
.chev { position: absolute; bottom: 1px; }
</style>
